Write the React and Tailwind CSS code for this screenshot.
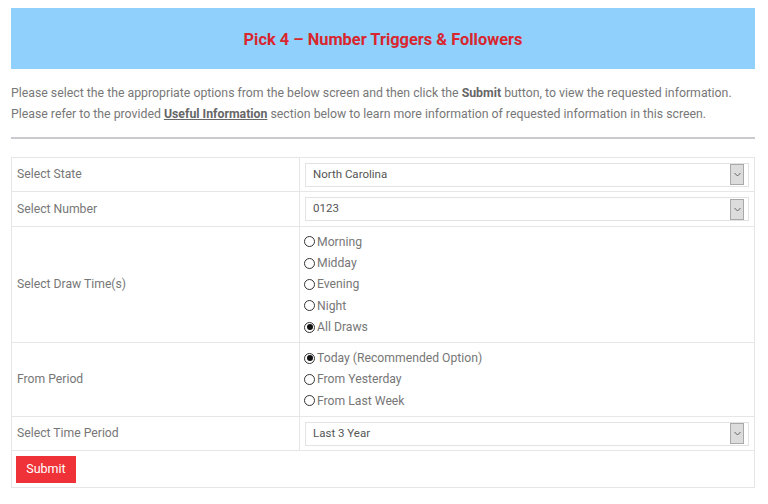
import React from "react";

function Radio({ checked, label }) {
  return (
    <div className="flex items-center h-[21.3px]">
      <span className="w-[11px] h-[11px] rounded-full border border-[#333] flex items-center justify-center mr-[2px] bg-white">
        {checked && <span className="w-[6px] h-[6px] rounded-full bg-[#111]" />}
      </span>
      <span>{label}</span>
    </div>
  );
}

function Select({ value }) {
  return (
    <div className="h-[24px] border border-[#e3e3e3] flex items-center justify-between pl-[7px] pr-[4px] text-[#555] text-[11.5px] bg-white">
      <span>{value}</span>
      <span className="w-[14px] h-[21px] bg-[#dcdcdc] border border-[#a9a9a9] flex items-center justify-center">
        <svg width="7" height="5" viewBox="0 0 7 5"><path d="M0.5 1 L3.5 4 L6.5 1" fill="none" stroke="#666" strokeWidth="1" /></svg>
      </span>
    </div>
  );
}

export default function App() {
  const cell = "border border-[#e6e6e6] align-middle";
  return (
    <div className="w-[768px] h-[504px] bg-white pt-[8px] pl-[11px] text-[12.2px] text-[#777] font-['Roboto',sans-serif]">
      <div className="w-[744px]">
        <div className="h-[61px] pt-[3px] bg-[#8fd1fc] flex items-center justify-center">
          <h1 className="text-[16.4px] font-bold text-[#d9262e]">Pick 4 – Number Triggers &amp; Followers</h1>
        </div>
        <div className="mt-[14px] leading-[21px] text-[12.3px]">
          <p>Please select the the appropriate options from the below screen and then click the <b className="text-[#666]">Submit</b> button, to view the requested information.</p>
          <p>Please refer to the provided <b className="underline text-[#666]">Useful Information</b> section below to learn more information of requested information in this screen.</p>
        </div>
        <div className="mt-[12px] h-[2px] bg-[#c9cbd0]" />
        <table className="mt-[18px] w-[744px] border-collapse">
          <tbody>
            <tr className="h-[34px]">
              <td className={cell + " w-[288px] pl-[5px]"}>Select State</td>
              <td className={cell + " px-[5px]"}><Select value="North Carolina" /></td>
            </tr>
            <tr className="h-[35px]">
              <td className={cell + " pl-[5px]"}>Select Number</td>
              <td className={cell + " px-[5px]"}><Select value="0123" /></td>
            </tr>
            <tr className="h-[116px]">
              <td className={cell + " pl-[5px]"}>Select Draw Time(s)</td>
              <td className={cell + " px-[4px]"}>
                <Radio label="Morning" />
                <Radio label="Midday" />
                <Radio label="Evening" />
                <Radio label="Night" />
                <Radio label="All Draws" checked />
              </td>
            </tr>
            <tr className="h-[74px]">
              <td className={cell + " pl-[5px]"}>From Period</td>
              <td className={cell + " px-[4px]"}>
                <Radio label="Today (Recommended Option)" checked />
                <Radio label="From Yesterday" />
                <Radio label="From Last Week" />
              </td>
            </tr>
            <tr className="h-[34px]">
              <td className={cell + " pl-[5px]"}>Select Time Period</td>
              <td className={cell + " px-[5px]"}><Select value="Last 3 Year" /></td>
            </tr>
            <tr className="h-[37px]">
              <td colSpan={2} className={cell + " px-[4px]"}>
                <button className="h-[27px] w-[60px] bg-[#ef3237] text-white text-[12.5px]">Submit</button>
              </td>
            </tr>
          </tbody>
        </table>
      </div>
    </div>
  );
}
